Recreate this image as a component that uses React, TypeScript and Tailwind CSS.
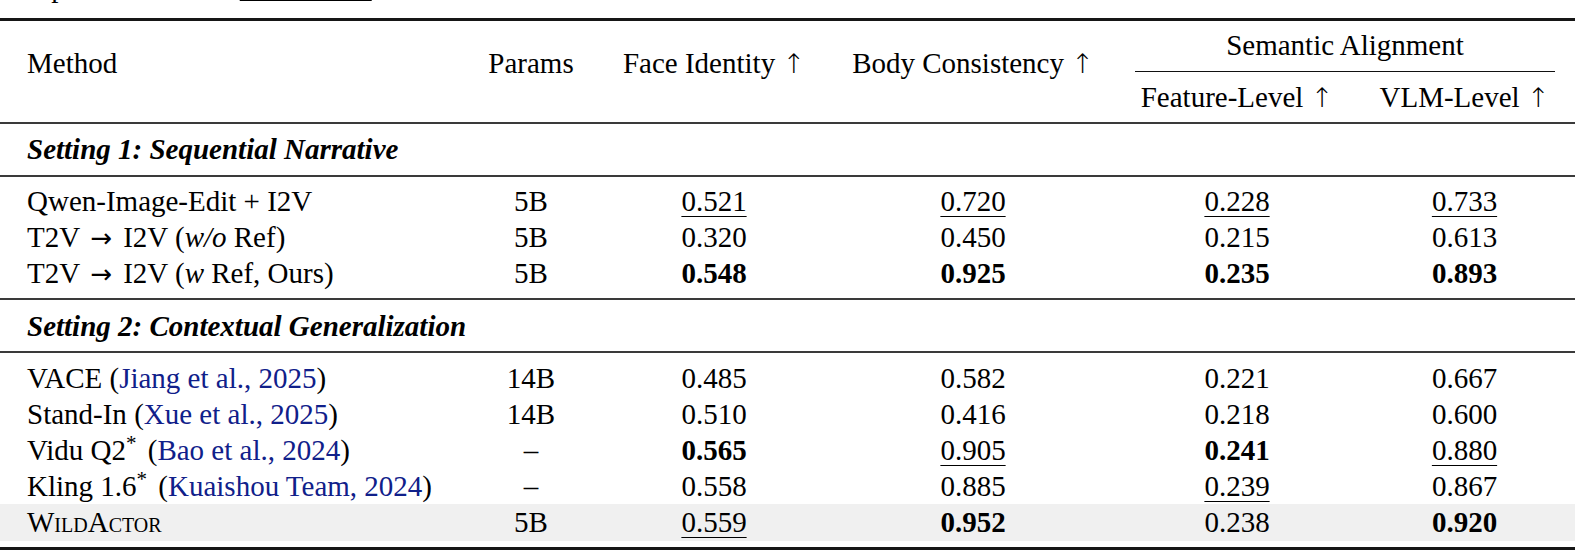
import React from "react";

type Cell = { t: string; s?: "b" | "u" };

const GRID = "grid grid-cols-[460px_142px_224px_294px_234px_1fr]";

function Val({ c }: { c: Cell }) {
  if (c.s === "b") return <span className="font-bold">{c.t}</span>;
  if (c.s === "u")
    return (
      <span className="underline decoration-1 underline-offset-[5px]">{c.t}</span>
    );
  return <span>{c.t}</span>;
}

function Cite({ a, y }: { a: string; y: string }) {
  return (
    <>
      (<span className="text-[#10208a]">{a}, {y}</span>)
    </>
  );
}

function RArrow() {
  return (
    <span className="inline-block w-[29px] text-center font-['DejaVu_Sans',sans-serif] font-normal not-italic text-[26px]">
      →
    </span>
  );
}

function UArrow() {
  return (
    <span className="font-['DejaVu_Sans',sans-serif] text-[27px] font-extralight">↑</span>
  );
}

function Star() {
  return <sup className="text-[21px] -top-[10px]">*</sup>;
}

type Row = { name: React.ReactNode; params: string; vals: Cell[]; hl?: boolean };

const group1: Row[] = [
  {
    name: <>Qwen-Image-Edit + I2V</>,
    params: "5B",
    vals: [
      { t: "0.521", s: "u" },
      { t: "0.720", s: "u" },
      { t: "0.228", s: "u" },
      { t: "0.733", s: "u" },
    ],
  },
  {
    name: (
      <>
        T2V <RArrow /> I2V (<i>w/o</i> Ref)
      </>
    ),
    params: "5B",
    vals: [{ t: "0.320" }, { t: "0.450" }, { t: "0.215" }, { t: "0.613" }],
  },
  {
    name: (
      <>
        T2V <RArrow /> I2V (<i>w</i> Ref, Ours)
      </>
    ),
    params: "5B",
    vals: [
      { t: "0.548", s: "b" },
      { t: "0.925", s: "b" },
      { t: "0.235", s: "b" },
      { t: "0.893", s: "b" },
    ],
  },
];

const group2: Row[] = [
  {
    name: (
      <>
        VACE <Cite a="Jiang et al." y="2025" />
      </>
    ),
    params: "14B",
    vals: [{ t: "0.485" }, { t: "0.582" }, { t: "0.221" }, { t: "0.667" }],
  },
  {
    name: (
      <>
        Stand-In <Cite a="Xue et al." y="2025" />
      </>
    ),
    params: "14B",
    vals: [{ t: "0.510" }, { t: "0.416" }, { t: "0.218" }, { t: "0.600" }],
  },
  {
    name: (
      <>
        Vidu Q2<Star />
        {"  "}
        <span className="ml-[4px]" />
        <Cite a="Bao et al." y="2024" />
      </>
    ),
    params: "–",
    vals: [
      { t: "0.565", s: "b" },
      { t: "0.905", s: "u" },
      { t: "0.241", s: "b" },
      { t: "0.880", s: "u" },
    ],
  },
  {
    name: (
      <>
        Kling 1.6<Star /> <span className="ml-[4px]" />
        <Cite a="Kuaishou Team" y="2024" />
      </>
    ),
    params: "–",
    vals: [{ t: "0.558" }, { t: "0.885" }, { t: "0.239", s: "u" }, { t: "0.867" }],
  },
  {
    name: <span className="[font-variant-caps:small-caps]">WildActor</span>,
    params: "5B",
    vals: [
      { t: "0.559", s: "u" },
      { t: "0.952", s: "b" },
      { t: "0.238" },
      { t: "0.920", s: "b" },
    ],
    hl: true,
  },
];

function DataRow({ r }: { r: Row }) {
  return (
    <div className={`${GRID} ${r.hl ? "bg-[#f0f0f0] h-[37px]" : "h-[36px]"}`}>
      <div className="pl-[27px] whitespace-nowrap">{r.name}</div>
      <div className="text-center">{r.params}</div>
      {r.vals.map((v, i) => (
        <div key={i} className="text-center">
          <Val c={v} />
        </div>
      ))}
    </div>
  );
}

export default function App() {
  return (
    <div className="w-[1575px] h-[554px] bg-white text-[#000] font-['Liberation_Serif','Times_New_Roman',serif] text-[29px] leading-[36px] overflow-hidden">
      {/* clipped previous caption line */}
      <div className="h-[18px] overflow-hidden">
        <div className="-mt-[31px] pl-[21px] whitespace-nowrap">
          <span>Top</span>
          <span className="inline-block w-[174px]"> results in bold and second-best </span>
          <span className="underline decoration-1 underline-offset-[3px] tracking-[0.8px]">underlined</span>
        </div>
      </div>
      {/* top rule */}
      <div className="h-[3px] bg-[#161616]" />

      {/* header */}
      <div className={`${GRID} h-[101px]`}>
        <div className="pl-[27px] pt-[24px]">Method</div>
        <div className="text-center pt-[24px]">Params</div>
        <div className="text-center pt-[24px]">
          Face Identity <UArrow />
        </div>
        <div className="text-center pt-[24px]">
          Body Consistency <UArrow />
        </div>
        <div className="col-span-2 flex flex-col">
          <div className="ml-[15px] mr-[20px] pt-[6px] text-center">Semantic Alignment</div>
          <div className="ml-[15px] mr-[20px] mt-[8px] h-px bg-[#111]" />
          <div className="grid grid-cols-[234px_1fr] mt-[7px]">
            <div className="text-center">
              Feature-Level <UArrow />
            </div>
            <div className="text-center">
              VLM-Level <UArrow />
            </div>
          </div>
        </div>
      </div>
      <div className="h-[2px] bg-[#3a3a3a]" />

      {/* setting 1 */}
      <div className="h-[51px] pt-[7px] pl-[27px] font-bold italic">Setting 1: Sequential Narrative</div>
      <div className="h-[2px] bg-[#3a3a3a]" />
      <div className="pt-[6px] pb-[7px]">
        {group1.map((r, i) => (
          <DataRow key={i} r={r} />
        ))}
      </div>
      <div className="h-[2px] bg-[#3a3a3a]" />

      {/* setting 2 */}
      <div className="h-[51px] pt-[8px] pl-[27px] font-bold italic">Setting 2: Contextual Generalization</div>
      <div className="h-[2px] bg-[#3a3a3a]" />
      <div className="pt-[7px] pb-[6px]">
        {group2.map((r, i) => (
          <DataRow key={i} r={r} />
        ))}
      </div>
      <div className="h-[3px] bg-[#161616]" />
    </div>
  );
}
